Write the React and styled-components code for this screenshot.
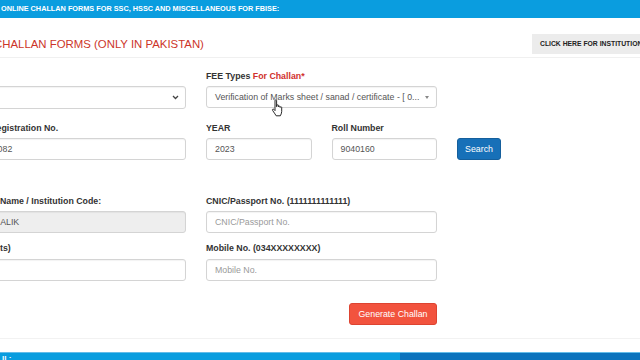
import React from "react";
import styled, { createGlobalStyle } from "styled-components";

const GlobalStyle = createGlobalStyle`
  html, body {
    margin: 0;
    padding: 0;
    background: #fff;
    font-family: "Liberation Sans", Arial, sans-serif;
  }
`;

const Page = styled.div`
  width: 640px;
  height: 360px;
  overflow: hidden;
  position: relative;
  background: #fff;
`;

const TopBar = styled.div`
  height: 18px;
  line-height: 17px;
  background: #0a9ddf;
  color: #fff;
  font-size: 7.3px;
  font-weight: bold;
  padding-left: 1px;
  white-space: nowrap;
`;

const Header = styled.div`
  height: 40px;
  box-sizing: border-box;
  padding-top: 12px;
  display: flex;
  align-items: center;
  justify-content: space-between;
  border-bottom: 1px solid #f0f0f0;
  margin-left: -6px;
`;

const Title = styled.h3`
  margin: 0;
  font-size: 11.4px;
  font-weight: normal;
  color: #cc3529;
  white-space: nowrap;
`;

const InstButton = styled.button`
  height: 20px;
  width: 120px;
  margin-right: -12px;
  border: none;
  background: #ececec;
  color: #222;
  font-family: inherit;
  font-size: 6.8px;
  font-weight: bold;
  text-align: left;
  padding-left: 8px;
  white-space: nowrap;
  overflow: hidden;
`;

const Form = styled.div`
  margin-left: -45px;
  padding-top: 13px;
  display: grid;
  grid-template-columns: repeat(6, 105.5px);
  column-gap: 20px;
`;

const Group = styled.div`
  grid-column: span ${(p) => p.span || 1};
  display: flex;
  flex-direction: column;
  justify-content: flex-end;
  margin-bottom: ${(p) => p.mb || 0}px;
`;

const Label = styled.label`
  font-size: 8.8px;
  font-weight: bold;
  color: #333;
  line-height: 11px;
  margin-bottom: ${(p) => p.gap || 4}px;
  white-space: nowrap;
`;

const Req = styled.span`
  color: #d0312d;
`;

const Input = styled.div`
  height: 22px;
  box-sizing: border-box;
  border: 1px solid #d4d4d4;
  border-radius: 3px;
  background: ${(p) => (p.disabled ? "#eeeeee" : "#fff")};
  color: ${(p) => (p.placeholder ? "#9a9a9a" : "#555")};
  font-size: 8.8px;
  line-height: 20px;
  padding: 0 8px;
  white-space: nowrap;
  overflow: hidden;
  box-shadow: inset 0 1px 1px rgba(0, 0, 0, 0.05);
`;

const Select = styled(Input)`
  display: flex;
  align-items: center;
  justify-content: space-between;
  height: ${(p) => p.h || 22}px;
  padding-right: ${(p) => p.pr || 6}px;
`;

const Caret = styled.span`
  width: 0;
  height: 0;
  border-left: 2.5px solid transparent;
  border-right: 2.5px solid transparent;
  border-top: 3.5px solid #888;
`;

const Btn = styled.button`
  height: 22px;
  border-radius: 3px;
  font-family: inherit;
  font-size: 8.8px;
  color: #fff;
  cursor: pointer;
  white-space: nowrap;
`;

const SearchBtn = styled(Btn)`
  width: 44px;
  padding: 0;
  background: #1770b8;
  border: 1px solid #155f9c;
`;

const GenerateBtn = styled(Btn)`
  width: 88px;
  height: 22px;
  padding: 0;
  background: #f2533e;
  border: 1px solid #dd4431;
`;

const ButtonRow = styled.div`
  grid-column: 3 / span 2;
  display: flex;
  justify-content: flex-end;
  padding-top: 22px;
`;

const Footer = styled.div`
  margin-top: 13px;
  border-top: 1px solid #f2f2f2;
  height: 13px;
`;

const BottomBar = styled.div`
  display: flex;
  height: 10px;
  border-top: 1px solid #63bce9;
`;

const BottomPart = styled.div`
  flex: ${(p) => p.grow};
  background: ${(p) => p.bg};
  color: #fff;
  font-size: 8px;
  font-weight: bold;
  line-height: 12px;
  padding-left: 2px;
`;

const Cursor = styled.svg`
  position: absolute;
  left: 271px;
  top: 99px;
`;

export default function App() {
  return (
    <Page>
      <GlobalStyle />
      <TopBar>ONLINE CHALLAN FORMS FOR SSC, HSSC AND MISCELLANEOUS FOR FBISE:</TopBar>
      <Header>
        <Title>CHALLAN FORMS (ONLY IN PAKISTAN)</Title>
        <InstButton>CLICK HERE FOR INSTITUTION CHALLAN</InstButton>
      </Header>
      <Form>
        <Group span={2} mb={14}>
          <Select h={23} pr={6}>
            <span />
            <svg width="7" height="5" viewBox="0 0 7 5">
              <path d="M1 1 L3.5 3.5 L6 1" fill="none" stroke="#444" strokeWidth="1.3" />
            </svg>
          </Select>
        </Group>
        <Group span={2} mb={15}>
          <Label>
            FEE Types <Req>For Challan*</Req>
          </Label>
          <Select pr={7}>
            <span>Verification of Marks sheet / sanad / certificate - [ 0...</span>
            <Caret />
          </Select>
        </Group>
        <Group span={2} />

        <Group span={2} mb={36}>
          <Label>Student Registration No.</Label>
          <Input>1011234082</Input>
        </Group>
        <Group mb={36}>
          <Label>YEAR</Label>
          <Input>2023</Input>
        </Group>
        <Group mb={36}>
          <Label>Roll Number</Label>
          <Input>9040160</Input>
        </Group>
        <Group mb={36}>
          <SearchBtn>Search</SearchBtn>
        </Group>
        <Group />

        <Group span={2} mb={10}>
          <Label>Candidate Name / Institution Code:</Label>
          <Input disabled>ZAHID MALIK</Input>
        </Group>
        <Group span={2} mb={10}>
          <Label>CNIC/Passport No. (1111111111111)</Label>
          <Input placeholder="true">CNIC/Passport No.</Input>
        </Group>
        <Group span={2} />

        <Group span={2}>
          <Label gap={5}>Fines (Digits)</Label>
          <Input />
        </Group>
        <Group span={2}>
          <Label gap={5}>Mobile No. (034XXXXXXXX)</Label>
          <Input placeholder="true">Mobile No.</Input>
        </Group>
        <Group span={2} />

        <ButtonRow>
          <GenerateBtn>Generate Challan</GenerateBtn>
        </ButtonRow>
      </Form>
      <Footer />
      <BottomBar>
        <BottomPart grow={400} bg="#0a9ddf">ll :</BottomPart>
        <BottomPart grow={240} bg="#0b73bd" />
      </BottomBar>
      <Cursor width="14" height="18" viewBox="0 0 14 18">
        <path
          d="M4 1.5c0-.8 1.6-.8 1.6 0v6.2l.3-.1V6.4c0-.8 1.6-.8 1.6 0v1.4c0-.8 1.6-.8 1.6 0v.6c0-.8 1.6-.8 1.6 0v4.2c0 1.6-.8 3-1.4 4.2H5.2C4.4 15.4 2.6 13 1.6 11.4c-.6-1 .5-1.8 1.3-1L4 11.6z"
          fill="#fff"
          stroke="#111"
          strokeWidth="0.9"
          strokeLinejoin="round"
        />
      </Cursor>
    </Page>
  );
}
